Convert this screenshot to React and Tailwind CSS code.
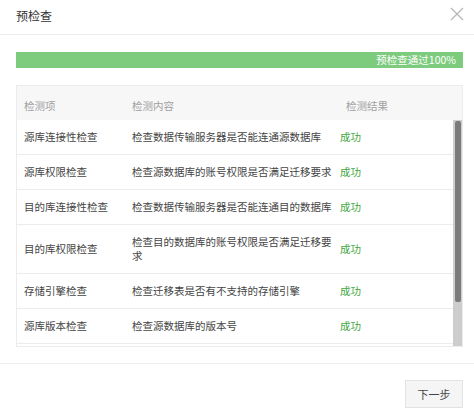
const rows = [
  { name: "源库连接性检查", desc: "检查数据传输服务器是否能连通源数据库" },
  { name: "源库权限检查", desc: "检查源数据库的账号权限是否满足迁移要求" },
  { name: "目的库连接性检查", desc: "检查数据传输服务器是否能连通目的数据库" },
  { name: "目的库权限检查", desc: "检查目的数据库的账号权限是否满足迁移要求" },
  { name: "存储引擎检查", desc: "检查迁移表是否有不支持的存储引擎" },
  { name: "源库版本检查", desc: "检查源数据库的版本号" },
];

export default function App() {
  return (
    <div className="w-[474px] h-[419px] bg-white flex flex-col font-['Noto_Sans_CJK_SC','Noto_Sans',sans-serif] text-[#333]">
      {/* header */}
      <div className="h-[35px] border-b border-[#ededed] flex items-start justify-between pl-[16px] pr-[10px] pt-[8px]">
        <span className="text-[12px] leading-[16px] text-[#333]">预检查</span>
        <svg width="14" height="14" viewBox="0 0 14 14" className="mt-[-1px]">
          <path d="M1 1 L13 13 M13 1 L1 13" stroke="#b5b5b5" strokeWidth="1.2" fill="none" />
        </svg>
      </div>

      {/* body */}
      <div className="pl-[16px] pr-[11px] pt-[17px] h-[329px] border-b border-[#ededed]">
        <div className="h-[16px] bg-[#7dcb7d] text-white text-[10.5px] leading-[16px] text-right pr-[7px]">
          预检查通过100%
        </div>

        <div className="mt-[17px] border border-[#ececec] text-[10.5px]">
          <div className="h-[34px] bg-[#f7f7f8] flex text-[#a0a0a0] leading-[14px] pt-[13px]">
            <div className="w-[107px] pl-[7px]">检测项</div>
            <div className="w-[208px] pl-[8px]">检测内容</div>
            <div className="flex-1 pl-[14px]">检测结果</div>
          </div>
          <div className="flex h-[226px] overflow-hidden">
            <div className="flex-1">
              {rows.map((r) => (
                <div key={r.name} className="flex border-b border-[#ececec] pt-[10px] pb-[10px] leading-[14px] items-center">
                  <div className="w-[107px] pl-[7px] text-[#444]">{r.name}</div>
                  <div className="w-[208px] pl-[8px] text-[#444]">{r.desc}</div>
                  <div className="flex-1 pl-[8px] text-[#3ea63e]">成功</div>
                </div>
              ))}
            </div>
            <div className="w-[9px] bg-[#cdcdcd] flex justify-center">
              <div className="w-[6px] h-[181px] mt-[1px] bg-[#7b7b7b] rounded-[2px]" />
            </div>
          </div>
        </div>
      </div>

      {/* footer */}
      <div className="flex justify-end pr-[11px] pt-[16px]">
        <button className="w-[58px] h-[28px] bg-[#f5f5f5] border border-[#e3e3e3] text-[11px] text-[#444]">
          下一步
        </button>
      </div>
    </div>
  );
}
